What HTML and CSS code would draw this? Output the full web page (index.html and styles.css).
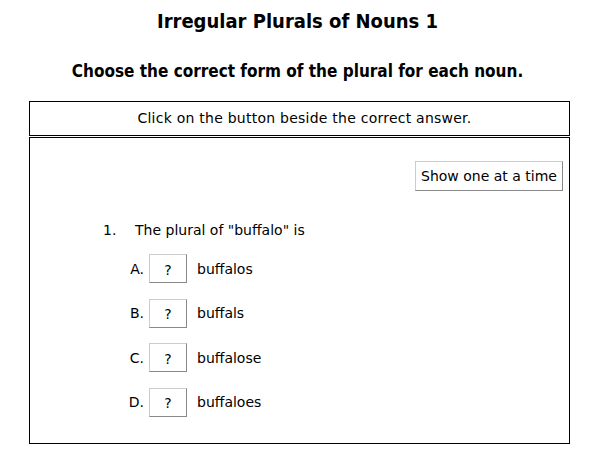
FILE: index.html
```html
<!DOCTYPE html>
<html>
    <head>
        <title>Irregular Plurals of Nouns 1</title>
        <meta charset="utf-8">
        <link rel="stylesheet" href="styles.css">
    </head>
    <body>
        <h1 class="quiz-title">Irregular Plurals of Nouns 1</h1>
        <h2 class="quiz-subtitle">Choose the correct form of the plural for each noun.</h2>

        <div class="quiz-box quiz-box--instructions">
            Click on the button beside the correct answer.
        </div>

        <div class="quiz-box quiz-box--main">
            <div class="quiz-toolbar">
                <button class="quiz-btn quiz-btn--mode">Show one at a time</button>
            </div>

            <div class="quiz-question">
                <div class="quiz-question__text">
                    <span class="quiz-question__num">1.</span>
                    <span>The plural of "buffalo" is</span>
                </div>
                <ol class="quiz-answers">
                    <li class="quiz-answer">
                        <span class="quiz-answer__letter">A.</span>
                        <button class="quiz-btn quiz-btn--choice">?</button>
                        <span>buffalos</span>
                    </li>
                    <li class="quiz-answer">
                        <span class="quiz-answer__letter">B.</span>
                        <button class="quiz-btn quiz-btn--choice">?</button>
                        <span>buffals</span>
                    </li>
                    <li class="quiz-answer">
                        <span class="quiz-answer__letter">C.</span>
                        <button class="quiz-btn quiz-btn--choice">?</button>
                        <span>buffalose</span>
                    </li>
                    <li class="quiz-answer">
                        <span class="quiz-answer__letter">D.</span>
                        <button class="quiz-btn quiz-btn--choice">?</button>
                        <span>buffaloes</span>
                    </li>
                </ol>
            </div>
        </div>
    </body>
</html>
```
FILE: styles.css
```css
* {
    box-sizing: border-box;
}

body {
    margin: 0;
    padding: 0 0 20px;
    font-family: "DejaVu Sans", Verdana, sans-serif;
    font-size: 14px;
    color: #000;
    background: #fff;
}

.quiz-title {
    margin: 9px 0 0;
    font-family: "DejaVu Sans Condensed", "DejaVu Sans", sans-serif;
    font-size: 20px;
    line-height: 24px;
    text-align: center;
}

.quiz-subtitle {
    margin: 28px 0 0;
    font-family: "DejaVu Sans Condensed", "DejaVu Sans", sans-serif;
    font-size: 17px;
    line-height: 21px;
    text-align: center;
}

.quiz-box {
    width: 541px;
    margin: 0 0 0 29px;
    border: 1px solid #000;
}

.quiz-box--instructions {
    margin-top: 19px;
    height: 35px;
    padding-left: 10px;
    line-height: 33px;
    letter-spacing: 0.24px;
    text-align: center;
}

.quiz-box--main {
    margin-top: 1px;
    height: 307px;
    padding: 23px 6px 0 0;
}

.quiz-toolbar {
    display: flex;
    justify-content: flex-end;
}

.quiz-btn {
    font-family: "DejaVu Sans", Verdana, sans-serif;
    font-size: 14px;
    color: #000;
    background: #fff;
    border: 1px solid;
    border-color: #ccc #888 #888 #ccc;
    border-radius: 0;
    cursor: pointer;
}

.quiz-btn--mode {
    width: 148px;
    height: 30px;
    padding: 0;
}

.quiz-question {
    margin-top: 29px;
    padding-left: 73px;
}

.quiz-question__text {
    display: flex;
    align-items: center;
    height: 20px;
}

.quiz-question__num {
    width: 32px;
}

.quiz-answers {
    list-style: none;
    margin: 0;
    padding: 14px 0 0 21px;
}

.quiz-answer {
    display: flex;
    align-items: center;
    height: 29px;
    margin-bottom: 15.67px;
}

.quiz-answer__letter {
    width: 20px;
    margin-right: 5px;
    text-align: right;
}

.quiz-btn--choice {
    width: 38px;
    height: 29px;
    padding: 2px 0 0;
    margin: 0 10px 0 0;
}
```
